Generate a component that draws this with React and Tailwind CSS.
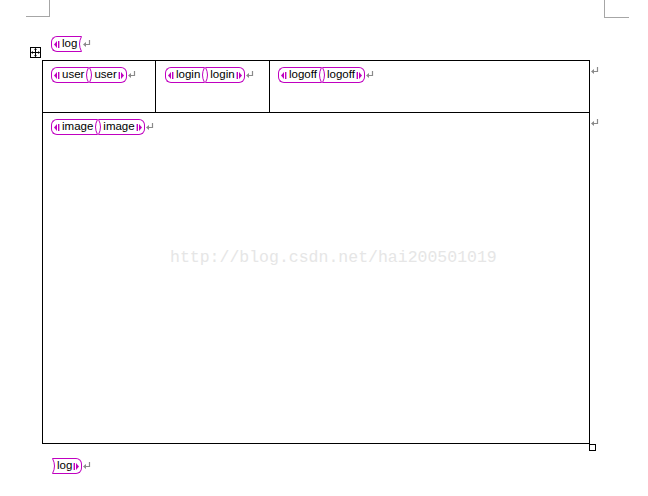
import React from 'react';

const PINK = '#c000c0';

const ReturnMark = () => (
  <svg width="8" height="7" viewBox="0 0 8 7" className="ml-[1px] mt-[4px] shrink-0">
    <path d="M6.5 0 V4.5 H1.5" stroke="#8a8a8a" strokeWidth="1.2" fill="none" />
    <path d="M0 4.5 L3 2 V7 Z" fill="#8a8a8a" />
  </svg>
);

// start tag: ◀| marker, text, "(" shaped end
const OpenTag = ({ children }) => (
  <span className="inline-flex h-[16px] items-center">
    <span
      className="flex h-full items-center gap-[2px] rounded-l-[6px] border-y border-l pl-[2px]"
      style={{ borderColor: PINK }}
    >
      <svg width="6" height="7" viewBox="0 0 6 7">
        <path d="M3 0 L0 3.5 L3 7 Z" fill={PINK} />
        <rect x="4" y="0" width="1.4" height="7" fill={PINK} />
      </svg>
      <span className="leading-none">{children}</span>
    </span>
    <svg width="5" height="16" viewBox="0 0 5 16" className="shrink-0">
      <path d="M0 0.5 H4.5 Q0.5 8 4.5 15.5 H0" stroke={PINK} strokeWidth="1" fill="none" />
    </svg>
  </span>
);

// end tag: ")" shaped start, text, |▶ marker
const CloseTag = ({ children }) => (
  <span className="inline-flex h-[16px] items-center">
    <svg width="5" height="16" viewBox="0 0 5 16" className="shrink-0">
      <path d="M5 0.5 H0.5 Q4.5 8 0.5 15.5 H5" stroke={PINK} strokeWidth="1" fill="none" />
    </svg>
    <span
      className="flex h-full items-center gap-[1px] rounded-r-[6px] border-y border-r pr-[2px]"
      style={{ borderColor: PINK }}
    >
      <span className="leading-none">{children}</span>
      <svg width="6" height="7" viewBox="0 0 6 7">
        <rect x="0.6" y="0" width="1.4" height="7" fill={PINK} />
        <path d="M3 0 L6 3.5 L3 7 Z" fill={PINK} />
      </svg>
    </span>
  </span>
);

const Pair = ({ name }) => (
  <div className="flex items-start">
    <OpenTag>{name}</OpenTag>
    <CloseTag>{name}</CloseTag>
    <ReturnMark />
  </div>
);

export default function App() {
  return (
    <div
      className="relative h-[496px] w-[648px] overflow-hidden bg-white text-[11.5px] text-black"
      style={{ fontFamily: '"Liberation Sans", Arial, sans-serif' }}
    >
      {/* page corner marks */}
      <div className="absolute left-[26px] top-0 h-[17px] w-[24px] border-b border-r border-[#a6a6a6]" />
      <div className="absolute left-[604px] top-0 h-[18px] w-[25px] border-b border-l border-[#a6a6a6]" />

      <div className="pl-[42px] pt-[36px]">
        <div className="flex items-start pl-[9px]">
          <OpenTag>log</OpenTag>
          <ReturnMark />
        </div>

        <div className="relative mt-[8px] w-[548px] border border-black">
          {/* move handle */}
          <div className="absolute -left-[13px] -top-[14px] flex h-[11px] w-[11px] items-center justify-center border border-black bg-white">
            <svg width="9" height="9" viewBox="0 0 9 9">
              <path d="M4.5 0.5 V8.5 M0.5 4.5 H8.5" stroke="black" strokeWidth="1" />
              <path d="M4.5 0 L3 1.8 H6 Z M4.5 9 L3 7.2 H6 Z M0 4.5 L1.8 3 V6 Z M9 4.5 L7.2 3 V6 Z" fill="black" />
            </svg>
          </div>

          <div className="relative grid h-[52px] grid-cols-[113px_114px_1fr] border-b border-black">
            <div className="border-r border-black pl-[8px] pt-[6px]">
              <Pair name="user" />
            </div>
            <div className="border-r border-black pl-[9px] pt-[6px]">
              <Pair name="login" />
            </div>
            <div className="pl-[8px] pt-[6px]">
              <Pair name="logoff" />
            </div>
            <div className="absolute -right-[10px] top-[2px]">
              <ReturnMark />
            </div>
          </div>

          <div className="relative h-[330px] pl-[8px] pt-[6px]">
            <Pair name="image" />
            <div className="absolute -right-[10px] top-[2px]">
              <ReturnMark />
            </div>
          </div>

          {/* resize handle */}
          <div className="absolute -bottom-[8px] -right-[7px] h-[7px] w-[7px] border border-black bg-white" />
        </div>

        <div className="mt-[14px] flex items-start pl-[10px]">
          <CloseTag>log</CloseTag>
          <ReturnMark />
        </div>
      </div>

      {/* watermark */}
      <div
        className="absolute left-[170px] top-[250px] text-[16.5px] leading-none text-[#e6e6e6]"
        style={{ fontFamily: '"Liberation Mono", monospace' }}
      >
        http://blog.csdn.net/hai200501019
      </div>
    </div>
  );
}
